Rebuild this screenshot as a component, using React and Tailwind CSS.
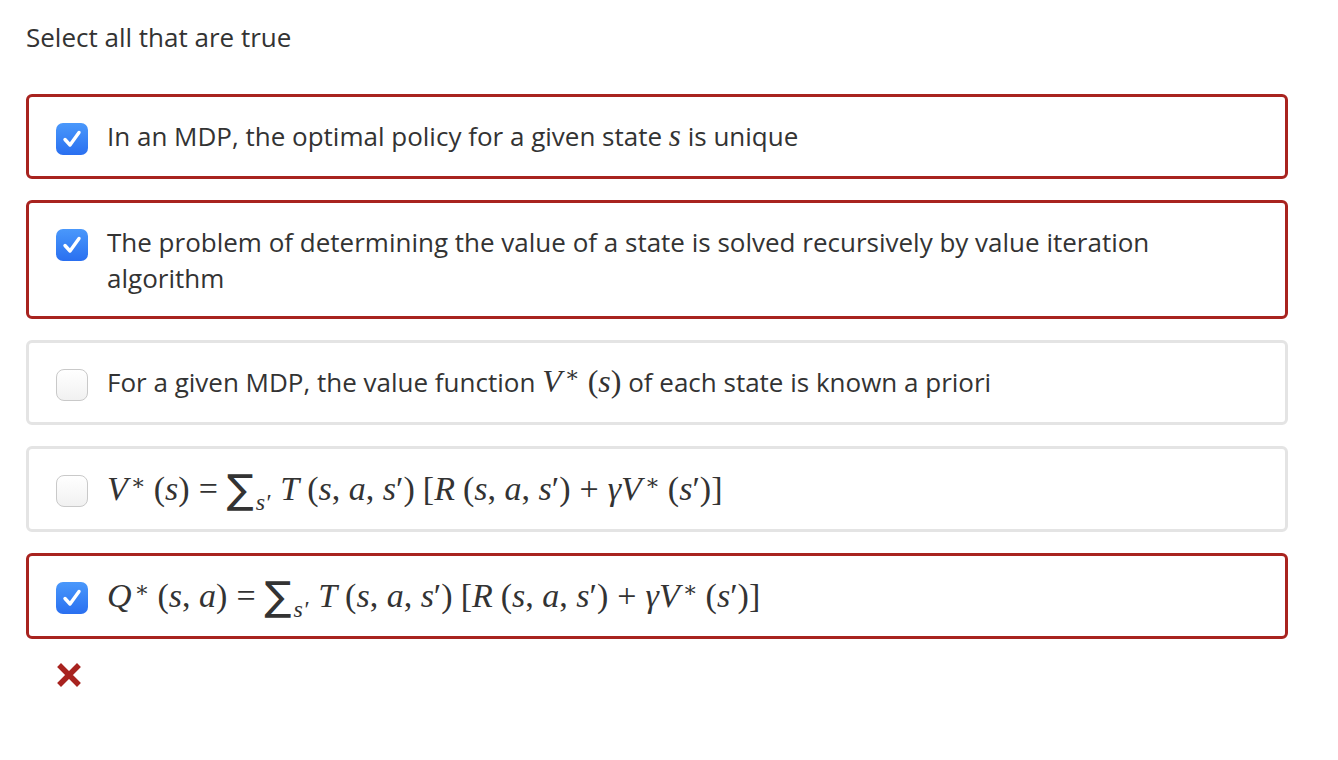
import { useState } from 'react';

const RED = 'border-[#a8231f]';
const GRAY = 'border-[#e4e4e4]';

function Box({ checked }) {
  if (checked) {
    return (
      <span className="mt-[5px] w-[32px] h-[32px] rounded-[7px] bg-gradient-to-b from-[#4a98fb] to-[#2a6ff0] flex items-center justify-center flex-shrink-0">
        <svg width="24" height="24" viewBox="0 0 24 24" fill="none">
          <path d="M5 12.5 L10 18 L19 5.5" stroke="white" strokeWidth="3.4" strokeLinecap="round" strokeLinejoin="round" />
        </svg>
      </span>
    );
  }
  return (
    <span className="mt-[5px] w-[32px] h-[32px] rounded-[8px] border border-[#c9c9c9] bg-gradient-to-b from-white to-[#f1f1f1] flex-shrink-0" />
  );
}

const serif = 'font-["Liberation_Serif","DejaVu_Serif",serif]';

function Star() {
  return <sup className="text-[22px] top-[-0.45em] ml-[3px] leading-[0]">∗</sup>;
}

function Op({ children }) {
  return <span className="mx-[9px]">{children}</span>;
}

function G({ children }) {
  return <span className="ml-[8px]">{children}</span>;
}

function Sum() {
  return (
    <span className="mr-[10px]">
      <span className='font-["DejaVu_Sans",sans-serif] text-[40px] leading-[0] align-[-3px]'>∑</span>
      <span className="text-[24px] italic leading-[0] align-[-10px] ml-[2px]">s′</span>
    </span>
  );
}

function Tail() {
  return (
    <>
      <i>T</i>
      <G>(</G>
      <i>s</i>, <i>a</i>, <i>s</i>′)<G>[</G>
      <i>R</i>
      <G>(</G>
      <i>s</i>, <i>a</i>, <i>s</i>′)
      <Op>+</Op>
      <i>γV</i>
      <Star />
      <G>(</G>
      <i>s</i>′)]
    </>
  );
}

const options = [
  {
    checked: true,
    body: (
      <>
        In an MDP, the optimal policy for a given state <i className={`${serif} text-[31px] leading-[0]`}>s</i> is unique
      </>
    ),
  },
  {
    checked: true,
    body: 'The problem of determining the value of a state is solved recursively by value iteration algorithm',
  },
  {
    checked: false,
    body: (
      <>
        For a given MDP, the value function{' '}
        <span className={`${serif} text-[32px] leading-[0]`}>
          <i>V</i>
          <Star />
          <G>(</G>
          <i>s</i>)
        </span>{' '}
        of each state is known a priori
      </>
    ),
  },
  {
    checked: false,
    math: true,
    body: (
      <span className={`${serif} text-[34px]`}>
        <i>V</i>
        <Star />
        <G>(</G>
        <i>s</i>)
        <Op>=</Op>
        <Sum />
        <Tail />
      </span>
    ),
  },
  {
    checked: true,
    math: true,
    body: (
      <span className={`${serif} text-[34px]`}>
        <i>Q</i>
        <Star />
        <G>(</G>
        <i>s</i>, <i>a</i>)
        <Op>=</Op>
        <Sum />
        <Tail />
      </span>
    ),
  },
];

export default function App() {
  const [state] = useState(options);
  return (
    <div className='bg-white min-h-[760px] w-[1338px] px-[26px] pt-[19px] font-["Open_Sans",sans-serif] text-[#333] text-[26px] leading-[36px]'>
      <div className="mb-[39px]">Select all that are true</div>
      <div className="flex flex-col gap-[21px] w-[1262px]">
        {state.map((o, i) => (
          <div
            key={i}
            className={`border-[3px] ${o.checked ? RED : GRAY} rounded-[6px] pl-[27px] pr-[24px] ${i === 1 ? 'pt-[21px] pb-[20px]' : 'py-[21px]'} flex items-start gap-[19px]`}
          >
            <Box checked={o.checked} />
            <div className={o.math ? 'leading-[38px] h-[38px]' : ''}>{o.body}</div>
          </div>
        ))}
      </div>
      <div className="mt-[24px] ml-[31px]">
        <svg width="24" height="24" viewBox="0 0 24 24">
          <path d="M4 4 L20 20 M20 4 L4 20" stroke="#a8231f" strokeWidth="5.5" strokeLinecap="square" />
        </svg>
      </div>
    </div>
  );
}
